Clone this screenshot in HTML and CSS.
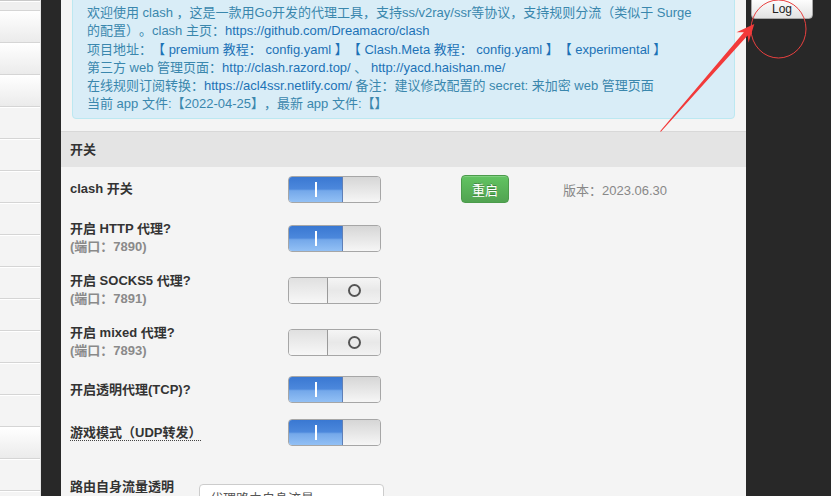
FILE: index.html
```html
<!DOCTYPE html>
<html lang="zh-CN">
<head>
<meta charset="utf-8">
<title>clash</title>
<link rel="stylesheet" href="styles.css">
</head>
<body>
<div class="page">
  <nav class="sidebar">
    <div class="nav-item nav-top"></div>
    <div class="nav-item nav-hl"></div>
    <div class="nav-item nav-hl"></div>
    <div class="nav-item nav-hl"></div>
    <div class="nav-item"></div>
    <div class="nav-item"></div>
    <div class="nav-item"></div>
    <div class="nav-item"></div>
    <div class="nav-item"></div>
    <div class="nav-item"></div>
    <div class="nav-item"></div>
    <div class="nav-item"></div>
    <div class="nav-item"></div>
    <div class="nav-item"></div>
    <div class="nav-item nav-hl"></div>
    <div class="nav-item"></div>
    <div class="nav-item"></div>
  </nav>
  <div class="gutter"></div>
  <main class="main">
    <div class="alert">
      <div>欢迎使用 clash ，这是一款用Go开发的代理工具，支持ss/v2ray/ssr等协议，支持规则分流（类似于 Surge</div>
      <div>的配置）。clash 主页：<a class="lnk">https://github.com/Dreamacro/clash</a></div>
      <div>项目地址：<a class="lnk">【 premium 教程： config.yaml 】【 Clash.Meta 教程： config.yaml 】【 experimental 】</a></div>
      <div>第三方 web 管理页面：<a class="lnk">http://clash.razord.top/</a> 、 <a class="lnk">http://yacd.haishan.me/</a></div>
      <div>在线规则订阅转换：<a class="lnk">https://acl4ssr.netlify.com/</a> 备注：建议修改配置的 secret: 来加密 web 管理页面</div>
      <div>当前 app 文件:【2022-04-25】，最新 app 文件:【】</div>
    </div>

    <div class="section-head">开关</div>

    <div class="row row-main">
      <div class="label">clash 开关</div>
      <div class="cell-toggle"><div class="toggle"><span class="on-part"></span><span class="knob knob-on"></span></div></div>
      <div class="cell-btn"><button class="btn-restart">重启</button></div>
      <div class="version">版本：2023.06.30</div>
    </div>

    <div class="row">
      <div class="label">开启 HTTP 代理?<br><span class="port">(端口：7890)</span></div>
      <div class="cell-toggle"><div class="toggle"><span class="on-part"></span><span class="knob knob-on"></span></div></div>
    </div>

    <div class="row">
      <div class="label">开启 SOCKS5 代理?<br><span class="port">(端口：7891)</span></div>
      <div class="cell-toggle"><div class="toggle"><span class="knob knob-off"></span><span class="off-part"></span></div></div>
    </div>

    <div class="row">
      <div class="label">开启 mixed 代理?<br><span class="port">(端口：7893)</span></div>
      <div class="cell-toggle"><div class="toggle"><span class="knob knob-off"></span><span class="off-part"></span></div></div>
    </div>

    <div class="row">
      <div class="label">开启透明代理(TCP)?</div>
      <div class="cell-toggle"><div class="toggle"><span class="on-part"></span><span class="knob knob-on"></span></div></div>
    </div>

    <div class="row">
      <div class="label"><span class="dotted">游戏模式（UDP转发）</span></div>
      <div class="cell-toggle"><div class="toggle"><span class="on-part"></span><span class="knob knob-on"></span></div></div>
    </div>

    <div class="row row-select">
      <div class="label label-narrow">路由自身流量透明<br>代理</div>
      <div class="select">代理路由自身流量<span class="caret"></span></div>
    </div>
  </main>
  <aside class="right">
    <button class="log-btn">Log</button>
  </aside>
</div>
<svg class="annot" width="831" height="496" viewBox="0 0 831 496">
  <ellipse cx="778.5" cy="29" rx="27.5" ry="29" fill="none" stroke="#e8403f" stroke-width="1"/>
  <polygon fill="#f23a3a" points="660.1,131.2 743.9,32.15 736.5,32.3 754.3,24 748.5,42.8 747.6,35.4 660.9,131.8"/>
</svg>
</body>
</html>
```
FILE: styles.css
```css
html, body {
  margin: 0;
  padding: 0;
}
body {
  position: relative;
  width: 831px;
  height: 496px;
  overflow: hidden;
  background: #282828;
  font-family: "Liberation Sans", Arial, "Noto Sans CJK SC", sans-serif;
  font-size: 13px;
  color: #333;
  text-spacing-trim: space-all;
}
.page {
  display: flex;
  height: 496px;
  overflow: hidden;
}

/* sidebar */
.sidebar {
  width: 40px;
  border-right: 1px solid #e6e6e6;
  background: #f4f4f4;
  flex-shrink: 0;
  overflow: hidden;
}
.nav-item {
  height: 31px;
  border-bottom: 1px solid #d5d5d5;
  box-shadow: inset 0 1px 0 #ffffff;
  background: #f4f4f4;
}
.nav-top {
  height: 9px;
  border-top: 1px solid #c9c9c9;
  background: #efefef;
}
.nav-hl {
  background: linear-gradient(to bottom, #ffffff, #ebebeb);
}
.gutter {
  width: 20px;
  flex-shrink: 0;
  background: #282828;
}

/* main */
.main {
  width: 685px;
  flex-shrink: 0;
  background: #f4f4f4;
  overflow: hidden;
}
.alert {
  margin: -5px 11px 0 11px;
  padding: 8px 14px 4px 14px;
  background: #d9edf7;
  border: 1px solid #bce8f1;
  border-radius: 4px;
  color: #3a87ad;
  line-height: 18.3px;
  height: 110px;
  box-sizing: content-box;
  white-space: nowrap;
}
.lnk {
  color: #1c72b6;
  text-decoration: none;
}
.section-head {
  margin-top: 12px;
  height: 35px;
  line-height: 35px;
  border-top: 1px solid #d8d8d8;
  background: #e4e4e4;
  padding-left: 9px;
  font-weight: bold;
  color: #333;
}

.row {
  display: flex;
  align-items: center;
  padding: 8px 0 8px 9px;
}
.row-main {
  padding: 8px 0 9px 9px;
}
.label {
  width: 218px;
  flex-shrink: 0;
  font-weight: bold;
  line-height: 18px;
  color: #333;
}
.port {
  color: #8a8a8a;
}
.dotted {
  border-bottom: 1px dotted #444;
}
.cell-toggle {
  width: 173px;
  flex-shrink: 0;
}
.cell-btn {
  width: 102px;
  flex-shrink: 0;
}
.version {
  color: #888;
}

/* toggle */
.toggle {
  width: 93px;
  height: 27px;
  box-sizing: border-box;
  border: 1px solid #a6a6a6;
  border-radius: 4px;
  display: flex;
  overflow: hidden;
}
.on-part {
  width: 53px;
  display: flex;
  align-items: center;
  justify-content: center;
  background: linear-gradient(to bottom, #3a78d2 0%, #4c88dc 48%, #74a8ea 55%, #92c0f5 100%);
}
.on-part::after {
  content: "";
  width: 2px;
  height: 15px;
  background: #ffffff;
}
.knob {
  display: block;
}
.knob-on {
  flex: 1;
  border-left: 1px solid #5f80b8;
  background: linear-gradient(to bottom, #d6d6d6, #f6f6f6);
}
.knob-off {
  width: 38px;
  border-right: 1px solid #9a9a9a;
  background: linear-gradient(to bottom, #e0e0e0, #f7f7f7);
}
.off-part {
  flex: 1;
  display: flex;
  align-items: center;
  justify-content: center;
  background: linear-gradient(to bottom, #f5f5f5 0%, #e8e8e8 50%, #f2f2f2 100%);
}
.off-part::after {
  content: "";
  width: 9px;
  height: 9px;
  border: 2px solid #555;
  border-radius: 50%;
}

/* restart button */
.btn-restart {
  width: 48px;
  height: 28px;
  padding: 0;
  border: 1px solid #4b9b4b;
  border-radius: 4px;
  background: linear-gradient(to bottom, #62c462, #51a351);
  color: #fff;
  font-family: "Liberation Sans", Arial, "Noto Sans CJK SC", sans-serif;
  font-size: 13px;
  text-shadow: 0 -1px 0 rgba(0, 0, 0, 0.25);
  box-shadow: inset 0 1px 0 rgba(255, 255, 255, 0.2);
}

/* select row */
.row-select {
  align-items: flex-start;
  padding-top: 24px;
}
.label-narrow {
  width: 129px;
}
.select {
  position: relative;
  margin-top: 6px;
  width: 185px;
  height: 30px;
  box-sizing: border-box;
  border: 1px solid #cccccc;
  border-radius: 4px;
  background: #ffffff;
  color: #555;
  padding-left: 10px;
  line-height: 28px;
}
.caret {
  position: absolute;
  right: 10px;
  top: 9px;
  width: 5px;
  height: 5px;
  border-right: 1px solid #777;
  border-bottom: 1px solid #777;
  transform: rotate(45deg);
}

/* right dark area */
.right {
  flex: 1;
  background: #282828;
}
.log-btn {
  display: block;
  margin: -2px 0 0 5px;
  width: 62px;
  height: 21px;
  padding: 1px 0 0 0;
  border: 1px solid #a8a8a8;
  border-radius: 0 0 4px 4px;
  background: linear-gradient(to bottom, #ffffff, #e2e2e2);
  color: #222;
  font-family: "Liberation Sans", Arial, sans-serif;
  font-size: 12px;
}

/* annotation overlay */
.annot {
  position: absolute;
  left: 0;
  top: 0;
  pointer-events: none;
}
```
